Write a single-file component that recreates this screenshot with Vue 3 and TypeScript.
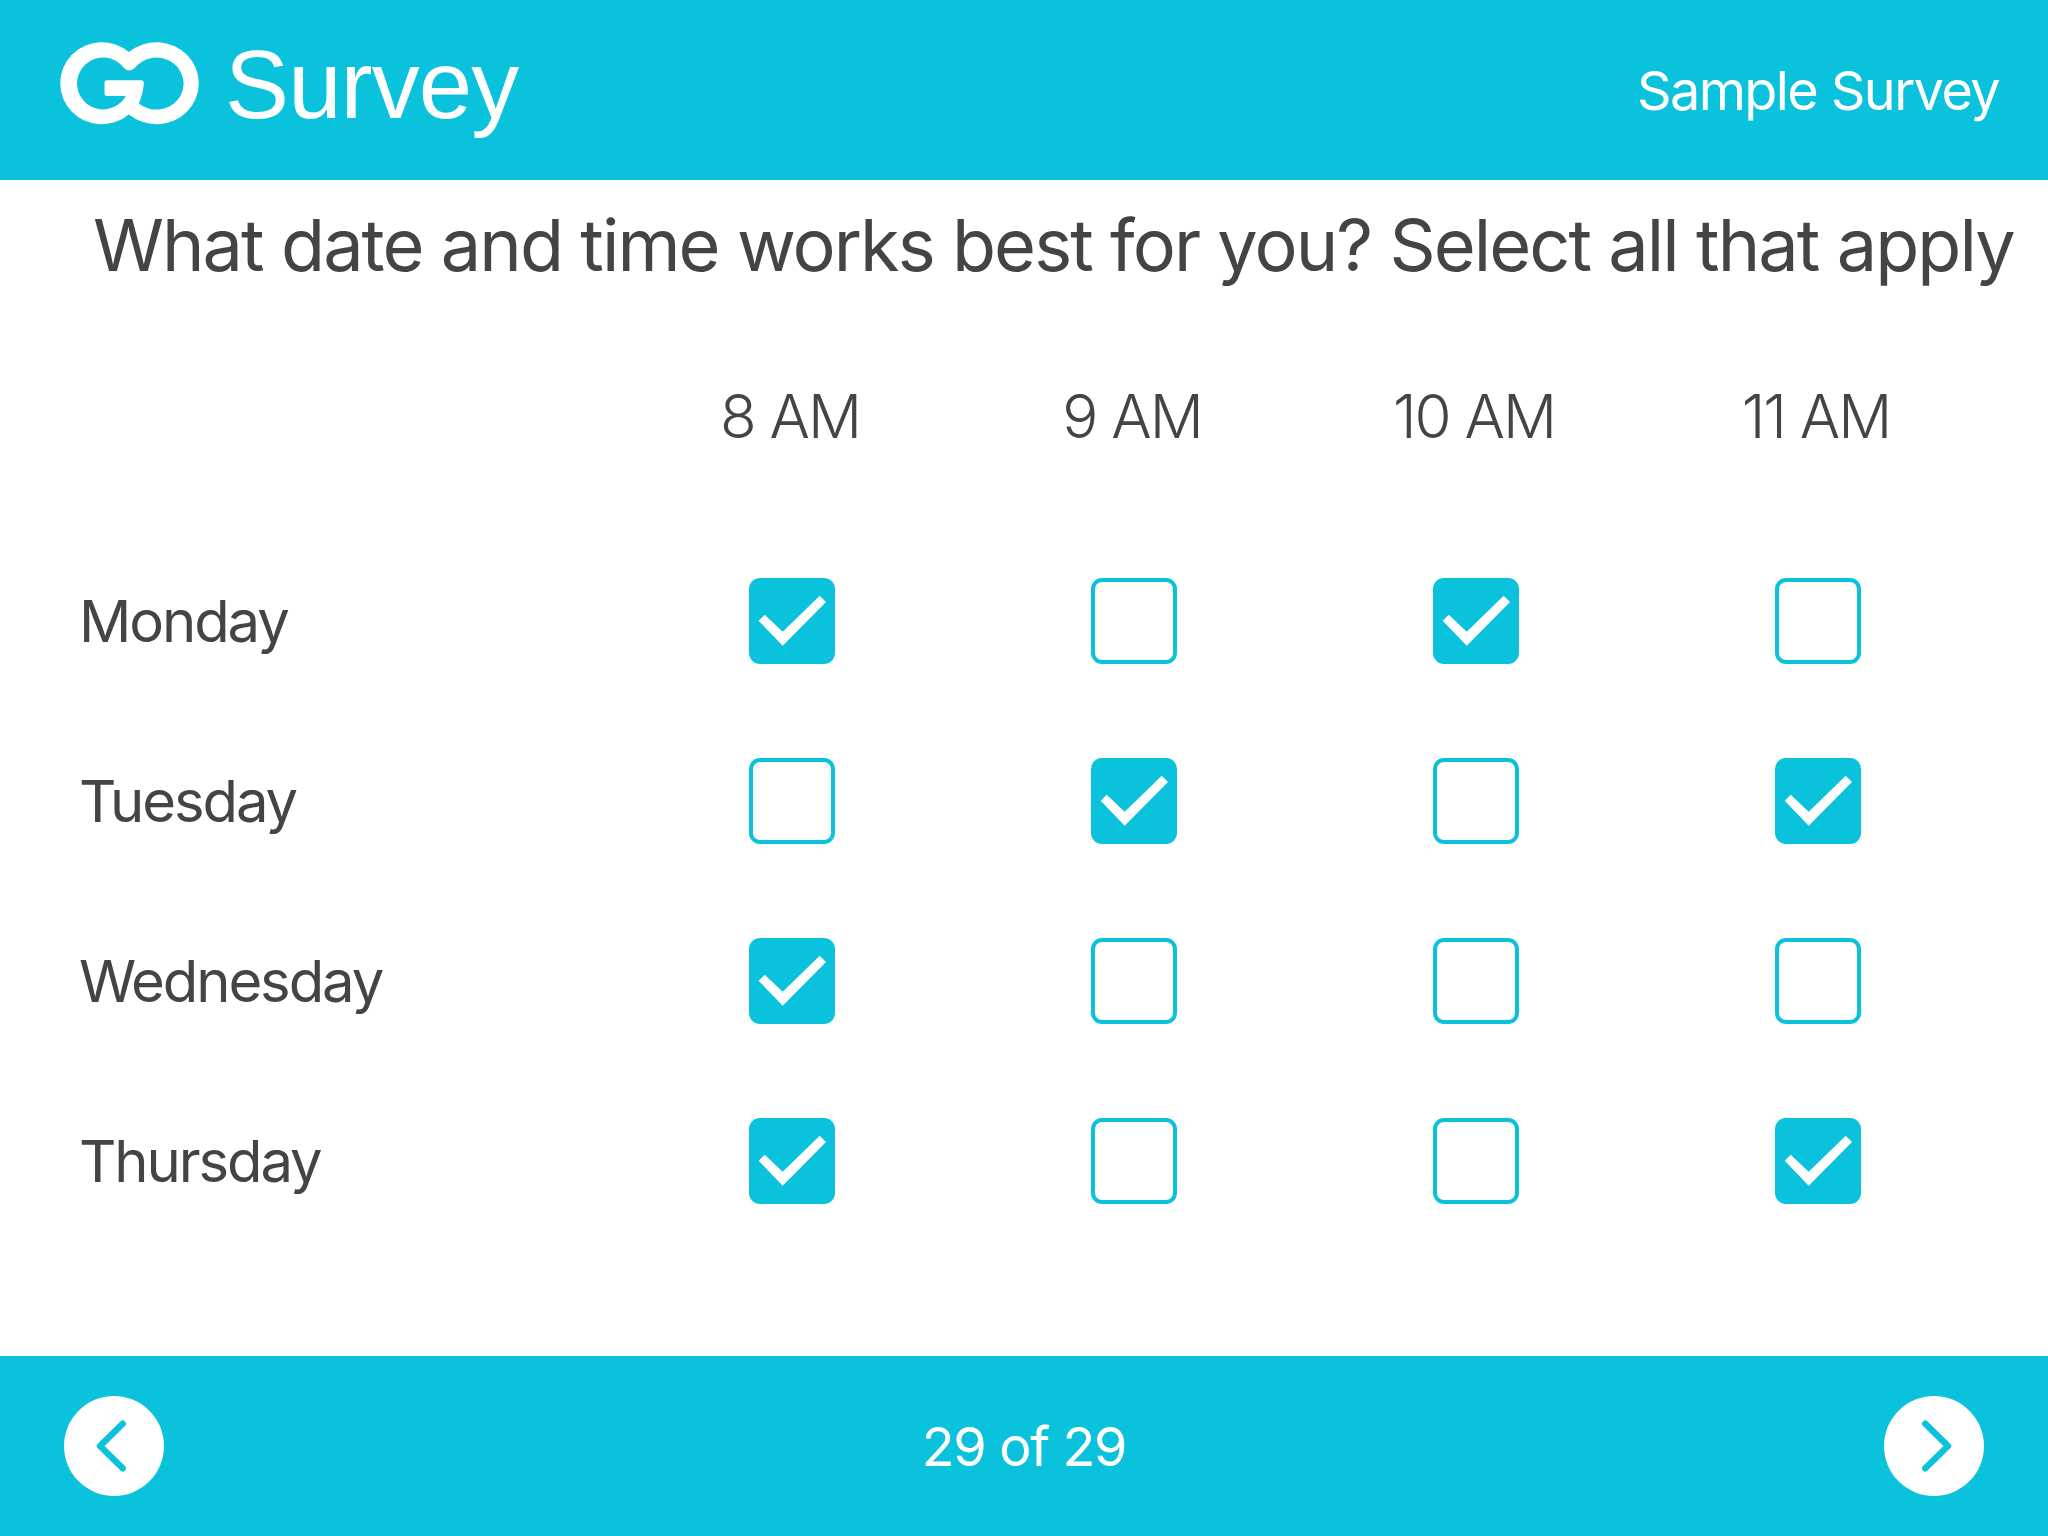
<script setup lang="ts">
const times = ["8 AM", "9 AM", "10 AM", "11 AM"]

const rows: { day: string; picks: boolean[] }[] = [
  { day: "Monday", picks: [true, false, true, false] },
  { day: "Tuesday", picks: [false, true, false, true] },
  { day: "Wednesday", picks: [true, false, false, false] },
  { day: "Thursday", picks: [true, false, false, true] },
]
</script>

<template>
  <div class="page">
    <header class="top">
      <div class="brand">
        <svg class="logo" viewBox="51 41 123 85" width="141" height="85" preserveAspectRatio="none">
          <path
            fill="#fff"
            fill-rule="evenodd"
            d="M112 52A36.4 41 0 1 0 112 114.5A37 41 0 1 0 112 52ZM107.7 68A22.7 26 0 1 0 109.3 96H93Q90.7 96 90.7 93.5V83Q90.7 80.3 93 80.3H122.5Q125 80.3 125 83Q124.5 93.5 120.7 103.5A23.7 26 0 1 0 117 68Q112.3 73 107.7 68Z"
          />
        </svg>
        <span class="brand-name">Survey</span>
      </div>
      <span class="survey-name">Sample Survey</span>
    </header>

    <main class="body">
      <h1 class="question">What date and time works best for you? Select all that apply</h1>
      <div class="matrix">
        <div class="corner"></div>
        <div v-for="t in times" :key="t" class="time">{{ t }}</div>
        <template v-for="row in rows" :key="row.day">
          <div class="day">{{ row.day }}</div>
          <div v-for="(on, i) in row.picks" :key="i" class="cell">
            <span class="box" :class="{ on }">
              <svg v-if="on" viewBox="0 0 86 86" width="86" height="86">
                <polygon fill="#fff" points="9.7,42.7 15.7,36.7 33.7,53.7 70.7,17.7 77,24 33.7,67.7" />
              </svg>
            </span>
          </div>
        </template>
      </div>
    </main>

    <footer class="bottom">
      <button class="nav" type="button" aria-label="Previous">
        <svg viewBox="0 0 100 100" width="100" height="100">
          <path d="M58.7 27.7 36 50 58.7 72.3" />
        </svg>
      </button>
      <span class="count">29 of 29</span>
      <button class="nav" type="button" aria-label="Next">
        <svg viewBox="0 0 100 100" width="100" height="100">
          <path d="M41.3 27.7 64 50 41.3 72.3" />
        </svg>
      </button>
    </footer>
  </div>
</template>

<style>
html,
body {
  margin: 0;
  background: #fff;
}
</style>

<style scoped>
.page {
  width: 2048px;
  height: 1536px;
  display: flex;
  flex-direction: column;
  font-family: Inter, "Liberation Sans", sans-serif;
  font-weight: 400;
  color: #444;
  overflow: hidden;
}

.top {
  height: 180px;
  flex: none;
  background: #0ac2db;
  color: #fff;
  display: flex;
  align-items: center;
  justify-content: space-between;
  padding: 0 49px 0 59px;
  box-sizing: border-box;
}

.brand {
  display: flex;
  align-items: center;
  gap: 25px;
}

.logo {
  display: block;
  margin-top: -13px;
}

.brand-name {
  font-family: "Liberation Sans", sans-serif;
  font-size: 96px;
  line-height: 1;
  letter-spacing: -0.9px;
  margin-top: -10px;
}

.survey-name {
  font-size: 54px;
  letter-spacing: -1.6px;
}

.body {
  flex: 1;
  min-height: 0;
}

.question {
  margin: 0;
  padding: 22px 0 0 93px;
  height: 110px;
  box-sizing: border-box;
  font-size: 72px;
  font-weight: 400;
  letter-spacing: -1.95px;
  line-height: 86px;
  white-space: nowrap;
}

.matrix {
  display: grid;
  grid-template-columns: 540px repeat(4, 342px);
  grid-template-rows: 205px repeat(4, 180px);
  padding: 36px 0 0 81px;
}

.time {
  display: flex;
  align-items: center;
  justify-content: center;
  align-self: start;
  height: 180px;
  padding-right: 4px;
  font-size: 60px;
  font-weight: 300;
  letter-spacing: -2px;
}

.day {
  display: flex;
  align-items: center;
  margin-left: -2px;
  font-size: 58px;
  letter-spacing: -2.1px;
}

.cell {
  display: flex;
  align-items: center;
  justify-content: center;
}

.box {
  width: 86px;
  height: 86px;
  box-sizing: border-box;
  border: 4px solid #0ac2db;
  border-radius: 11px;
  display: block;
}

.box.on {
  background: #0ac2db;
  border: 0;
}

.box svg {
  display: block;
}

.bottom {
  height: 180px;
  flex: none;
  background: #0ac2db;
  display: flex;
  align-items: center;
  justify-content: space-between;
  padding: 0 64px;
  box-sizing: border-box;
}

.count {
  color: #fff;
  font-size: 54px;
  letter-spacing: -1.4px;
}

.nav {
  width: 100px;
  height: 100px;
  border: 0;
  padding: 0;
  border-radius: 50%;
  background: #fff;
  display: block;
}

.nav svg {
  display: block;
}

.nav path {
  fill: none;
  stroke: #0ac2db;
  stroke-width: 6.5;
  stroke-linecap: round;
  stroke-linejoin: round;
}
</style>
